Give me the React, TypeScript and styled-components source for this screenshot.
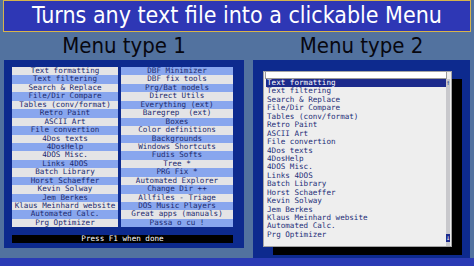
import styled, { createGlobalStyle } from "styled-components";

const leftItems = [
  "Text formatting",
  "Text filtering",
  "Search & Replace",
  "File/Dir Compare",
  "Tables (conv/format)",
  "Retro Paint",
  "ASCII Art",
  "File convertion",
  "4Dos texts",
  "4DosHelp",
  "4DOS Misc.",
  "Links 4DOS",
  "Batch Library",
  "Horst Schaeffer",
  "Kevin Solway",
  "Jem Berkes",
  "Klaus Meinhard website",
  "Automated Calc.",
  "Prg Optimizer",
];

const rightItems = [
  "DBF Minimizer",
  "DBF fix tools",
  "Prg/Bat models",
  "Direct Utils",
  "Everything (ext)",
  "Baregrep  (ext)",
  "Boxes",
  "Color definitions",
  "Backgrounds",
  "Windows Shortcuts",
  "Fudis Softs",
  "Tree *",
  "PRG Fix *",
  "Automated Explorer",
  "Change Dir ++",
  "Allfiles - Triage",
  "DOS Music Players",
  "Great apps (manuals)",
  "Passa o cu !",
];

const GlobalStyle = createGlobalStyle`
  html, body {
    margin: 0;
    padding: 0;
    background: #52729f;
  }
`;

const App = () => {
  // grid is filled row by row, so interleave the two columns
  const cells: { text: string; blue: boolean }[] = [];
  leftItems.forEach((item, i) => {
    cells.push({ text: item, blue: i % 2 === 1 });
    cells.push({ text: rightItems[i], blue: i % 2 === 0 });
  });

  return (
    <Page>
      <GlobalStyle />
      <TitleBar>Turns any text file into a clickable Menu</TitleBar>
      <Columns>
        <Column $width={240}>
          <Heading>Menu type 1</Heading>
          <Panel $height={188}>
            <MenuGrid>
              {cells.map((c, i) => (
                <Cell key={i} $blue={c.blue}>
                  {c.text}
                </Cell>
              ))}
            </MenuGrid>
            <StatusBar>Press F1 when done</StatusBar>
          </Panel>
        </Column>
        <Column $width={217}>
          <Heading>Menu type 2</Heading>
          <Panel>
            <ListBox>
              <ListHeader />
              <ListBody>
                <List>
                  {leftItems.map((item, i) => (
                    <ListItem key={item} $active={i === 0}>
                      {item}
                    </ListItem>
                  ))}
                </List>
                <ScrollBar>
                  <Arrow>↑</Arrow>
                  <Arrow $down>↓</Arrow>
                </ScrollBar>
              </ListBody>
            </ListBox>
          </Panel>
        </Column>
      </Columns>
      <BottomStrip />
    </Page>
  );
};
export default App;

const Page = styled.div`
  width: 474px;
  height: 266px;
  overflow: hidden;
  display: flex;
  flex-direction: column;
  background: #52729f;
`;

const TitleBar = styled.div`
  box-sizing: border-box;
  height: 32px;
  margin: 0 3px 0 3px;
  border: 1px solid #d6b44c;
  background: #2e37b5;
  color: #ffffff;
  font-family: "DejaVu Sans", sans-serif;
  font-stretch: condensed;
  font-size: 23px;
  line-height: 29px;
  text-align: center;
  white-space: nowrap;
`;

const Columns = styled.div`
  flex: 1;
  display: flex;
  gap: 9px;
  padding-left: 4px;
`;

const Column = styled.div<{ $width: number }>`
  width: ${(p) => p.$width}px;
  display: flex;
  flex-direction: column;
`;

const Heading = styled.div`
  height: 28px;
  font-family: "DejaVu Sans", sans-serif;
  font-stretch: condensed;
  font-size: 22px;
  line-height: 28px;
  color: #07070f;
  text-align: center;
`;

const Panel = styled.div<{ $height?: number }>`
  box-sizing: border-box;
  background: #0d2a8e;
  ${(p) => (p.$height ? `height: ${p.$height}px;` : "flex: 1;")}
  padding: 7px 11px 0 8px;
  display: flex;
  flex-direction: column;
`;

const MenuGrid = styled.div`
  display: grid;
  grid-template-columns: 106px 112px;
  grid-auto-rows: 8.45px;
  column-gap: 3px;
`;

const Cell = styled.div<{ $blue: boolean }>`
  background: ${(p) => (p.$blue ? "#88a6ee" : "#e4e4e6")};
  color: #1b2a6e;
  font-family: "DejaVu Sans Mono", monospace;
  font-size: 7.6px;
  line-height: 8.45px;
  text-align: center;
  white-space: pre;
  overflow: hidden;
`;

const StatusBar = styled.div`
  margin-top: 7.5px;
  height: 8px;
  background: #000000;
  color: #ffffff;
  font-family: "DejaVu Sans Mono", monospace;
  font-size: 7.6px;
  line-height: 8px;
  text-align: center;
`;

const ListBox = styled.div`
  box-sizing: border-box;
  margin: 4px 0 0 2px;
  width: 189px;
  height: 176px;
  background: #eeeeee;
  border: 1px solid #a4a4a4;
  box-shadow: 10px 8px 0 #000000;
  display: flex;
  flex-direction: column;
`;

const ListHeader = styled.div`
  height: 6px;
  margin: 0 4px 0 1px;
  background: #ffffff;
  border: 1px solid #9a9a9a;
  border-top: none;
`;

const ListBody = styled.div`
  flex: 1;
  display: flex;
`;

const List = styled.div`
  flex: 1;
  padding-left: 2px;
`;

const ListItem = styled.div<{ $active: boolean }>`
  height: 8.45px;
  padding-left: 1px;
  background: ${(p) => (p.$active ? "#1c2a8c" : "transparent")};
  color: ${(p) => (p.$active ? "#ffffff" : "#1e2f78")};
  font-family: "DejaVu Sans Mono", monospace;
  font-size: 7.6px;
  line-height: 8.45px;
  white-space: pre;
`;

const ScrollBar = styled.div`
  width: 4px;
  margin-right: 1px;
  background: #c8c8cc;
  display: flex;
  flex-direction: column;
  justify-content: space-between;
  align-items: center;
  padding-bottom: 4px;
`;

const Arrow = styled.div<{ $down?: boolean }>`
  width: 4px;
  height: 8px;
  background: ${(p) => (p.$down ? "#1c2a8c" : "transparent")};
  font-family: "DejaVu Sans Mono", monospace;
  font-size: 7px;
  line-height: 8px;
  color: ${(p) => (p.$down ? "#ffffff" : "#223080")};
  text-align: center;
  overflow: visible;
  display: flex;
  justify-content: center;
`;

const BottomStrip = styled.div`
  height: 8px;
  background: #2a3bb5;
`;
